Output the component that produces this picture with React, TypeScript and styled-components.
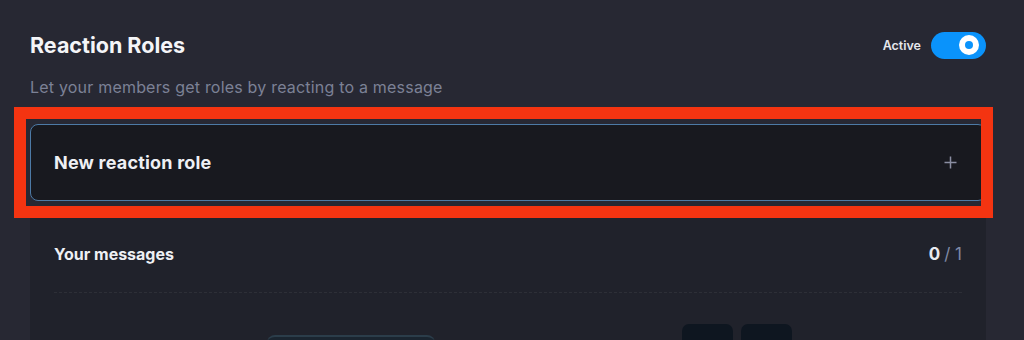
import React from "react";
import styled, { createGlobalStyle } from "styled-components";

const Global = createGlobalStyle`
  html, body { margin: 0; padding: 0; background: #272833; }
  body { font-family: Inter, "Open Sans", Arial, sans-serif; -webkit-font-smoothing: antialiased; }
  #root { min-height: 340px; }
`;

const Page = styled.div`
  position: relative;
  height: 340px;
  overflow: hidden;
  box-sizing: border-box;
  padding: 31px 38px 0 30px;
  background: #272833;
`;

const Header = styled.div`
  display: flex;
  align-items: center;
  justify-content: space-between;
  height: 28px;
`;

const Title = styled.h1`
  margin: 0;
  font-size: 21.5px;
  font-weight: 700;
  color: #f4f5f8;
  letter-spacing: 0;
`;

const ActiveWrap = styled.div`
  display: flex;
  align-items: center;
  gap: 10px;
`;

const ActiveLabel = styled.span`
  font-size: 12.5px;
  font-weight: 600;
  color: #e6e7ec;
`;

const Toggle = styled.div`
  width: 55px;
  height: 27px;
  border-radius: 14px;
  background: #0a93fb;
  display: flex;
  align-items: center;
  justify-content: flex-end;
  padding-right: 7px;
  box-sizing: border-box;
`;

const Knob = styled.div`
  width: 20px;
  height: 20px;
  border-radius: 50%;
  background: #ffffff;
  display: flex;
  align-items: center;
  justify-content: center;
  &::after {
    content: "";
    width: 8px;
    height: 8px;
    border-radius: 50%;
    background: #0a93fb;
  }
`;

const Subtitle = styled.p`
  margin: 18px 0 0;
  font-size: 16px;
  line-height: 20px;
  letter-spacing: 0.2px;
  color: #7c8196;
`;

const NewCard = styled.div`
  margin-top: 27px;
  height: 77px;
  box-sizing: border-box;
  border: 1px solid #4d7aa6;
  border-radius: 8px;
  background: #18191f;
  display: flex;
  align-items: center;
  justify-content: space-between;
  padding: 0 28px 0 23px;
`;

const CardLabel = styled.span`
  font-size: 18px;
  font-weight: 700;
  color: #eef0f4;
  letter-spacing: 0.2px;
`;

const PlusIcon = styled.svg`
  width: 13px;
  height: 13px;
  color: #8a8ea2;
`;

const Panel = styled.div`
  margin-top: 11px;
  background: #20222b;
  padding: 28px 24px 0 24px;
  height: 200px;
  box-sizing: border-box;
`;

const PanelHeader = styled.div`
  display: flex;
  align-items: center;
  justify-content: space-between;
  height: 28px;
`;

const PanelTitle = styled.span`
  font-size: 16px;
  font-weight: 700;
  color: #eef0f4;
`;

const Count = styled.span`
  font-size: 17px;
  font-weight: 700;
  color: #e8eaf0;
`;

const CountTotal = styled.span`
  font-weight: 400;
  color: #7f8aa6;
`;

const Divider = styled.div`
  margin-top: 24px;
  border-top: 1px dashed rgba(255, 255, 255, 0.06);
`;

const Preview = styled.div`
  display: flex;
  align-items: flex-start;
  margin-top: 31px;
  padding-left: 213px;
`;

const Bubble = styled.div`
  margin-top: 11px;
  width: 168px;
  height: 40px;
  border-radius: 8px 8px 0 0;
  background: #1a2530;
  border-top: 2px solid #2b3d4a;
`;

const Squares = styled.div`
  display: flex;
  gap: 8px;
  margin-left: 247px;
`;

const Square = styled.div`
  width: 51px;
  height: 51px;
  border-radius: 7px;
  background: #0e1620;
`;

const Highlight = styled.div`
  position: absolute;
  left: 14px;
  top: 107px;
  width: 979px;
  height: 111px;
  box-sizing: border-box;
  border: 12px solid #f43411;
  pointer-events: none;
`;

export default function App() {
  return (
    <>
      <Global />
      <Page>
        <Header>
          <Title>Reaction Roles</Title>
          <ActiveWrap>
            <ActiveLabel>Active</ActiveLabel>
            <Toggle>
              <Knob />
            </Toggle>
          </ActiveWrap>
        </Header>
        <Subtitle>Let your members get roles by reacting to a message</Subtitle>
        <NewCard>
          <CardLabel>New reaction role</CardLabel>
          <PlusIcon viewBox="0 0 13 13" fill="none" stroke="currentColor" strokeWidth="1.5">
            <path d="M6.5 0.5v12M0.5 6.5h12" />
          </PlusIcon>
        </NewCard>
        <Panel>
          <PanelHeader>
            <PanelTitle>Your messages</PanelTitle>
            <Count>
              0 <CountTotal>/ 1</CountTotal>
            </Count>
          </PanelHeader>
          <Divider />
          <Preview>
            <Bubble />
            <Squares>
              <Square />
              <Square />
            </Squares>
          </Preview>
        </Panel>
        <Highlight />
      </Page>
    </>
  );
}
